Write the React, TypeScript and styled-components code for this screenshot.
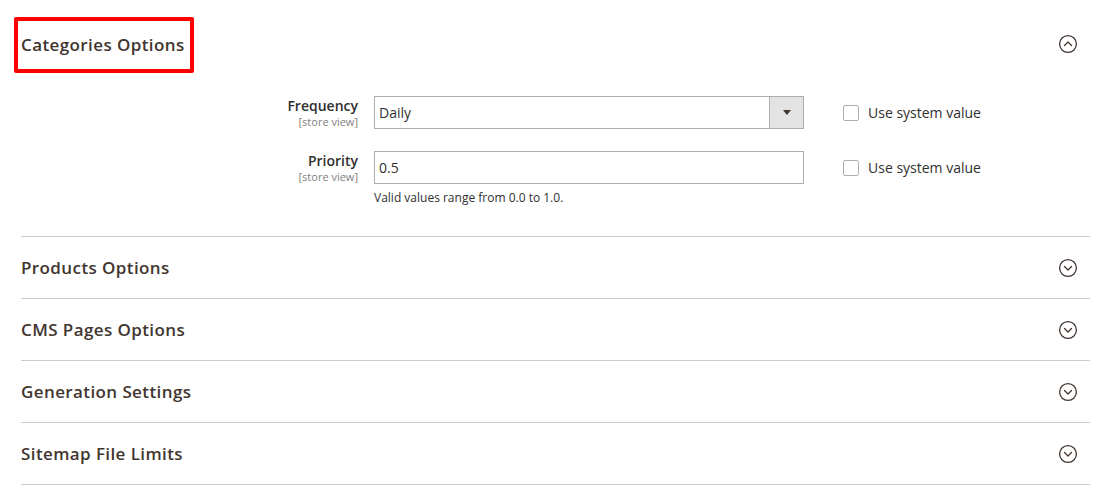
import React from "react";
import styled, { createGlobalStyle } from "styled-components";

const Global = createGlobalStyle`
  html, body { margin: 0; padding: 0; background: #fff; }
  body { font-family: "Open Sans", "Liberation Sans", sans-serif; color: #303030; }
  * { box-sizing: border-box; }
`;

const Page = styled.div`
  padding: 13px 13px 0 21px;
  width: 1103px;
`;

const Section = styled.section<{ $open?: boolean }>`
  border-bottom: 1px solid #cccccc;
  padding-bottom: ${(p) => (p.$open ? "30px" : "0")};
`;

const Header = styled.div`
  display: flex;
  align-items: center;
  justify-content: space-between;
  height: 61px;
`;

const Title = styled.h2<{ $highlight?: boolean }>`
  margin: 0;
  font-size: 17px;
  font-weight: 600;
  letter-spacing: 0.4px;
  color: #41362f;
  line-height: 20px;
  ${(p) =>
    p.$highlight
      ? `border: 4px solid #ff0000; border-radius: 2px; padding: 14px 5px 14px 3px; margin-left: -7px; margin-top: 3px;`
      : ""}
`;

const ToggleIcon = styled.svg`
  width: 20px;
  height: 20px;
  margin-right: 12px;
  flex: none;
`;

const Fields = styled.div`
  display: flex;
  flex-direction: column;
  gap: 22px;
  padding-top: 22px;
`;

const FieldRow = styled.div`
  display: grid;
  grid-template-columns: 337px 430px auto;
  column-gap: 16px;
  align-items: start;
`;

const LabelCol = styled.div`
  text-align: right;
  padding-top: 1px;
`;

const Label = styled.div`
  font-size: 14px;
  font-weight: 600;
  color: #303030;
  line-height: 18px;
`;

const Scope = styled.div`
  font-size: 11px;
  color: #808080;
  line-height: 14px;
`;

const Control = styled.div`
  display: flex;
  flex-direction: column;
`;

const SelectBox = styled.div`
  height: 33px;
  border: 1px solid #adadad;
  display: flex;
  align-items: stretch;
  background: #fff;
`;

const SelectValue = styled.div`
  flex: 1;
  padding-left: 4px;
  font-size: 14px;
  display: flex;
  align-items: center;
  color: #303030;
`;

const SelectArrow = styled.div`
  width: 34px;
  background: #e3e3e3;
  border-left: 1px solid #adadad;
  display: flex;
  align-items: center;
  justify-content: center;
  &::after {
    content: "";
    border-left: 4px solid transparent;
    border-right: 4px solid transparent;
    border-top: 5px solid #41362f;
  }
`;

const TextInput = styled.div`
  height: 33px;
  border: 1px solid #adadad;
  padding-left: 4px;
  font-size: 14px;
  display: flex;
  align-items: center;
  color: #303030;
`;

const Note = styled.div`
  font-size: 12px;
  color: #303030;
  margin-top: 6px;
  line-height: 16px;
`;

const SystemValue = styled.label`
  display: flex;
  align-items: center;
  gap: 9px;
  height: 33px;
  margin-left: 23px;
  font-size: 14px;
  color: #303030;
`;

const Checkbox = styled.span`
  width: 16px;
  height: 16px;
  border: 1px solid #adadad;
  border-radius: 2px;
  background: #fff;
  margin-top: 1px;
`;

const Chevron = ({ up }: { up?: boolean }) => (
  <ToggleIcon viewBox="0 0 20 20">
    <circle cx="10" cy="10" r="8.4" fill="none" stroke="#41362f" strokeWidth="1.3" />
    <path
      d={up ? "M6.5 11.5 L10 8 L13.5 11.5" : "M6.5 8.5 L10 12 L13.5 8.5"}
      fill="none"
      stroke="#41362f"
      strokeWidth="1.3"
      strokeLinecap="round"
      strokeLinejoin="round"
    />
  </ToggleIcon>
);

const collapsed = [
  "Products Options",
  "CMS Pages Options",
  "Generation Settings",
  "Sitemap File Limits",
];

export default function App() {
  return (
    <>
      <Global />
      <Page>
        <Section $open>
          <Header>
            <Title $highlight>Categories Options</Title>
            <Chevron up />
          </Header>
          <Fields>
            <FieldRow>
              <LabelCol>
                <Label>Frequency</Label>
                <Scope>[store view]</Scope>
              </LabelCol>
              <Control>
                <SelectBox>
                  <SelectValue>Daily</SelectValue>
                  <SelectArrow />
                </SelectBox>
              </Control>
              <SystemValue>
                <Checkbox />
                Use system value
              </SystemValue>
            </FieldRow>
            <FieldRow>
              <LabelCol>
                <Label>Priority</Label>
                <Scope>[store view]</Scope>
              </LabelCol>
              <Control>
                <TextInput>0.5</TextInput>
                <Note>Valid values range from 0.0 to 1.0.</Note>
              </Control>
              <SystemValue>
                <Checkbox />
                Use system value
              </SystemValue>
            </FieldRow>
          </Fields>
        </Section>
        {collapsed.map((t) => (
          <Section key={t}>
            <Header>
              <Title>{t}</Title>
              <Chevron />
            </Header>
          </Section>
        ))}
      </Page>
    </>
  );
}
